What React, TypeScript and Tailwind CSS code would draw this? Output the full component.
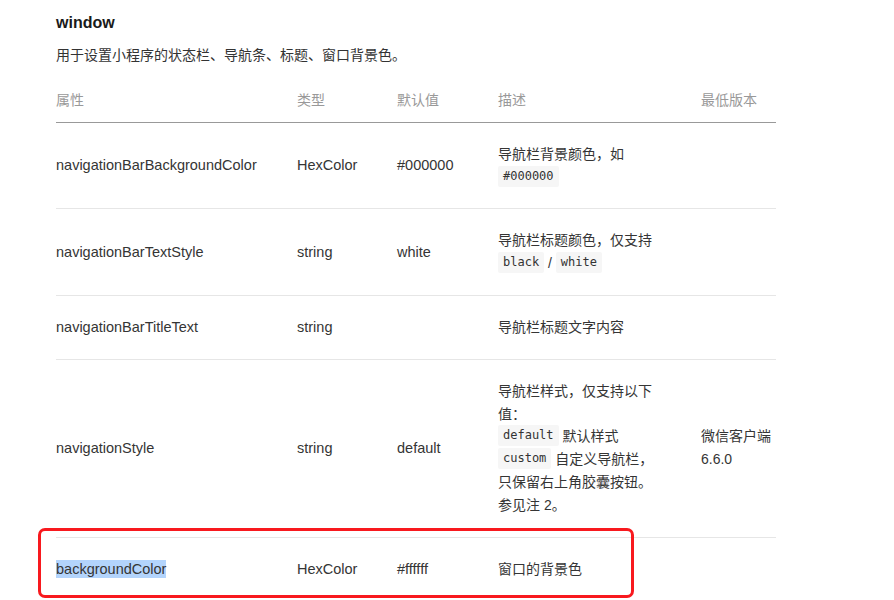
const rows = [
  {
    name: "navigationBarBackgroundColor",
    type: "HexColor",
    def: "#000000",
    desc: (
      <>
        <div>导航栏背景颜色，如</div>
        <div>
          <Code>#000000</Code>
        </div>
      </>
    ),
    ver: null,
  },
  {
    name: "navigationBarTextStyle",
    type: "string",
    def: "white",
    desc: (
      <>
        <div>导航栏标题颜色，仅支持</div>
        <div>
          <Code>black</Code> / <Code>white</Code>
        </div>
      </>
    ),
    ver: null,
  },
  {
    name: "navigationBarTitleText",
    type: "string",
    def: "",
    desc: <div>导航栏标题文字内容</div>,
    ver: null,
  },
  {
    name: "navigationStyle",
    type: "string",
    def: "default",
    desc: (
      <>
        <div>导航栏样式，仅支持以下</div>
        <div>值：</div>
        <div>
          <Code>default</Code> 默认样式
        </div>
        <div>
          <Code>custom</Code> 自定义导航栏，
        </div>
        <div>只保留右上角胶囊按钮。</div>
        <div>参见注 2。</div>
      </>
    ),
    ver: (
      <>
        <div>微信客户端</div>
        <div>6.6.0</div>
      </>
    ),
  },
];

function Code({ children }: { children: React.ReactNode }) {
  return (
    <code className="inline-block h-[21px] rounded-[2px] bg-[#f6f6f6] px-[5px] align-top font-['DejaVu_Sans_Mono',monospace] text-[12px] leading-[21px] text-[#333]">
      {children}
    </code>
  );
}

const grid = "grid grid-cols-[241px_100px_101px_203px_75px] items-center";

const App = () => {
  return (
    <div className="min-h-[600px] bg-white pl-[56px] pt-[11px] font-['Liberation_Sans','Noto_Sans_CJK_SC',sans-serif] text-[#353535]">
      <h3 className="text-[16px] font-bold leading-[24px] text-[#1a1a1a]">window</h3>
      <p className="mt-[9px] text-[14px] leading-[22px] text-[#333]">
        用于设置小程序的状态栏、导航条、标题、窗口背景色。
      </p>

      <div className="mt-[23px] w-[720px] text-[14.5px] leading-[22.8px]">
        <div className={`${grid} border-b border-[#999] pb-[10px] text-[14px] text-[#999]`}>
          <div>属性</div>
          <div>类型</div>
          <div>默认值</div>
          <div>描述</div>
          <div>最低版本</div>
        </div>

        {rows.map((row) => (
          <div key={row.name} className={`${grid} border-b border-[#e6e6e6] py-5`}>
            <div>{row.name}</div>
            <div>{row.type}</div>
            <div>{row.def}</div>
            <div className="text-[14px]">{row.desc}</div>
            <div className="text-[14px]">{row.ver}</div>
          </div>
        ))}

        <div className={`${grid} relative border-b border-[#e6e6e6] py-5`}>
          <div>
            <span className="bg-[#b3d4fc] py-[1px]">backgroundColor</span>
          </div>
          <div>HexColor</div>
          <div>#ffffff</div>
          <div className="text-[14px]">窗口的背景色</div>
          <div></div>
          <div className="pointer-events-none absolute left-[-18px] top-[-10px] h-[70px] w-[596px] rounded-[7px] border-[3px] border-[#f8191e]" />
        </div>
      </div>
    </div>
  );
};

export default App;
